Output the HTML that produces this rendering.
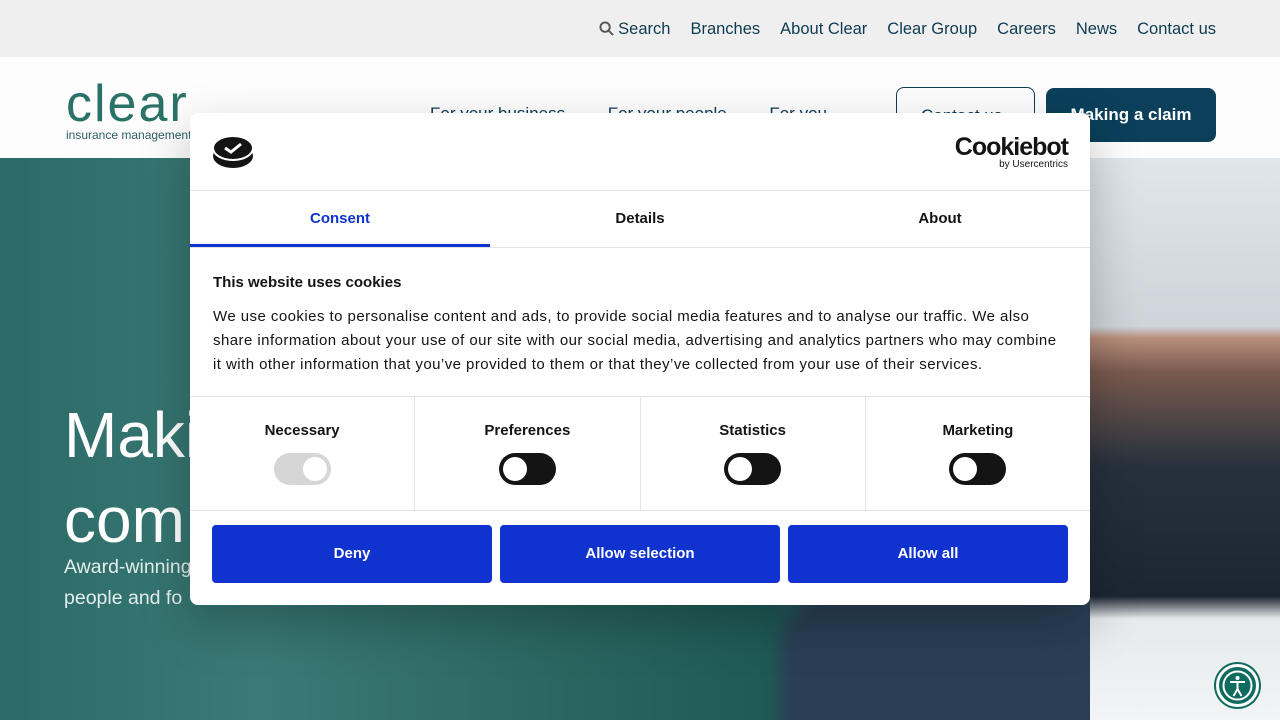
<!DOCTYPE html>
<html><head><meta charset="utf-8"><style>
*{margin:0;padding:0;box-sizing:border-box}
html,body{width:1280px;height:720px;overflow:hidden}
body{font-family:"Liberation Sans",sans-serif;position:relative;background:#fff}
.top{position:absolute;top:0;left:0;width:1280px;height:57px;background:#efefef}
.top .links{position:absolute;right:64px;top:20px;font-size:16.5px;color:#0e3b52;display:flex;gap:20px}
.hdr{position:absolute;top:57px;left:0;width:1280px;height:101px;background:#fdfdfd}
.logo{position:absolute;left:66px;top:78px;color:#2a7268;font-size:52px;letter-spacing:2px;line-height:1;font-weight:300}
.logo small{display:block;font-size:12px;letter-spacing:0;color:#2c5e60;margin-top:-1px}
.nav{position:absolute;top:104px;left:430px;font-size:17px;color:#0e3b52}
.btn1{position:absolute;left:896px;top:87px;width:139px;height:54px;border:1.5px solid #0e3b52;border-radius:8px;color:#0e3b52;font-size:17px;padding:18px 0 0 24px}
.btn2{position:absolute;left:1046px;top:88px;width:170px;height:54px;background:#0b3f5a;border-radius:8px;color:#fff;font-weight:bold;font-size:17px;text-align:center;line-height:54px}
.hero{position:absolute;top:158px;left:0;width:1280px;height:562px;overflow:hidden;background:linear-gradient(90deg,#2b6a66 0%,#3a7a76 20%,#2a6560 45%,#1f5a57 60%,#2d5660 70%,#9aa3a8 86%,#d8dee2 92%,#e9ecee 100%)}
.hero .l1{position:absolute;left:64px;top:240px;color:#fff;font-size:64px}
.hero .l2{position:absolute;left:64px;top:325px;color:#fff;font-size:64px}
.hero .s1{position:absolute;left:64px;top:394px;color:#e5eeee;font-size:19.5px;line-height:31px}
.shirt{position:absolute;left:780px;top:402px;width:360px;height:200px;border-radius:45% 40% 0 0;background:#2a3f55;filter:blur(8px)}
.right{position:absolute;top:0;width:190px;height:562px;background:linear-gradient(180deg,#e0e6ea 0,#cdd5da 30%,#b98f7c 32%,#7a5a4e 38%,#26313d 55%,#1c2633 78%,#e6eaec 82%,#f2f4f5 100%)}
.dlg{position:absolute;left:190px;top:113px;width:900px;height:492px;background:#fff;border-radius:8px;box-shadow:0 20px 50px rgba(0,0,0,.25);overflow:hidden;color:#141414}
.dhead{height:78px;border-bottom:1px solid #e4e4e4;position:relative}
.cb{position:absolute;right:22px;top:22px;text-align:right;line-height:1}
.cb b{font-size:25px;letter-spacing:-1px}
.cb div{font-size:10px}
.tabs{display:flex;height:57px;border-bottom:1px solid #e4e4e4}
.tabs div{flex:1;text-align:center;line-height:55px;font-weight:bold;font-size:15px}
.tabs .on{color:#1032cf;border-bottom:3px solid #1032cf}
.body{padding:26px 23px 0 23px;height:149px;border-bottom:1px solid #e4e4e4}
.body h3{font-size:15px;margin-bottom:14px}
.body p{font-size:15px;line-height:24px;color:#141414;letter-spacing:0.45px;white-space:nowrap}
.cats{display:flex;height:114px;border-bottom:1px solid #e4e4e4}
.cats div{flex:1;text-align:center;border-right:1px solid #e4e4e4;font-weight:bold;font-size:15px;padding-top:25px}
.cats div:last-child{border:none}
.tg{width:57px;height:32px;border-radius:16px;background:#141414;margin:14px auto 0;position:relative}
.tg:after{content:"";position:absolute;left:4px;top:4px;width:24px;height:24px;border-radius:50%;background:#fff}
.tg.dis{background:#d6d6d6}.tg.dis:after{left:29px}
.btns{display:flex;gap:8px;padding:14px 22px}
.btns div{flex:1;height:58px;background:#1032cf;color:#fff;font-weight:bold;font-size:15px;text-align:center;line-height:58px;border-radius:4px}
.acc{position:absolute;left:1216px;top:664px;width:43px;height:43px;border-radius:50%;background:#0f6b5e;border:3px solid #fff;box-shadow:0 0 0 2px #0f6b5e}
</style></head><body>
<div class="top"><div class="links"><span><svg width="15" height="15" viewBox="0 0 16 16" style="vertical-align:-2px"><circle cx="6.5" cy="6.5" r="5" fill="none" stroke="#555" stroke-width="2"/><path d="M10 10l5 5" stroke="#555" stroke-width="2"/></svg> Search</span><span>Branches</span><span>About Clear</span><span>Clear Group</span><span>Careers</span><span>News</span><span>Contact us</span></div></div>
<div class="hdr"></div>
<div class="logo">clear<small>insurance management</small></div>
<div class="nav">For your business ⌄ &nbsp;&nbsp;&nbsp; For your people ⌄ &nbsp;&nbsp;&nbsp; For you</div>
<div class="btn1">Contact us</div>
<div class="btn2">Making a claim</div>
<div class="hero"><div class="l1">Making</div><div class="l2">com</div><div class="s1">Award-winning<br>people and fo</div><div class="shirt"></div><div class="right" style="left:1090px"></div></div>
<div class="dlg">
<div class="dhead"><svg style="position:absolute;left:22px;top:22px" width="42" height="34" viewBox="0 0 42 34"><ellipse cx="21" cy="21" rx="20" ry="12" fill="#141414"/><ellipse cx="21" cy="13" rx="20" ry="12" fill="#141414" stroke="#fff" stroke-width="2"/><path d="M13 13l6 4 10-8" stroke="#fff" stroke-width="3" fill="none"/></svg>
<div class="cb"><b>Cookiebot</b><div>by Usercentrics</div></div></div>
<div class="tabs"><div class="on">Consent</div><div>Details</div><div>About</div></div>
<div class="body"><h3>This website uses cookies</h3><p>We use cookies to personalise content and ads, to provide social media features and to analyse our traffic. We also<br>share information about your use of our site with our social media, advertising and analytics partners who may combine<br>it with other information that you’ve provided to them or that they’ve collected from your use of their services.</p></div>
<div class="cats"><div>Necessary<div class="tg dis"></div></div><div>Preferences<div class="tg"></div></div><div>Statistics<div class="tg"></div></div><div>Marketing<div class="tg"></div></div></div>
<div class="btns"><div>Deny</div><div>Allow selection</div><div>Allow all</div></div>
</div>
<div class="acc"><svg width="37" height="37" viewBox="0 0 37 37"><circle cx="18.5" cy="18.5" r="14" fill="none" stroke="#fff" stroke-width="2"/><circle cx="18.5" cy="11" r="2" fill="#fff"/><path d="M11 15h15M18.5 15v7l-4 7M18.5 22l4 7" stroke="#fff" stroke-width="2" fill="none"/></svg></div>
</body></html>
